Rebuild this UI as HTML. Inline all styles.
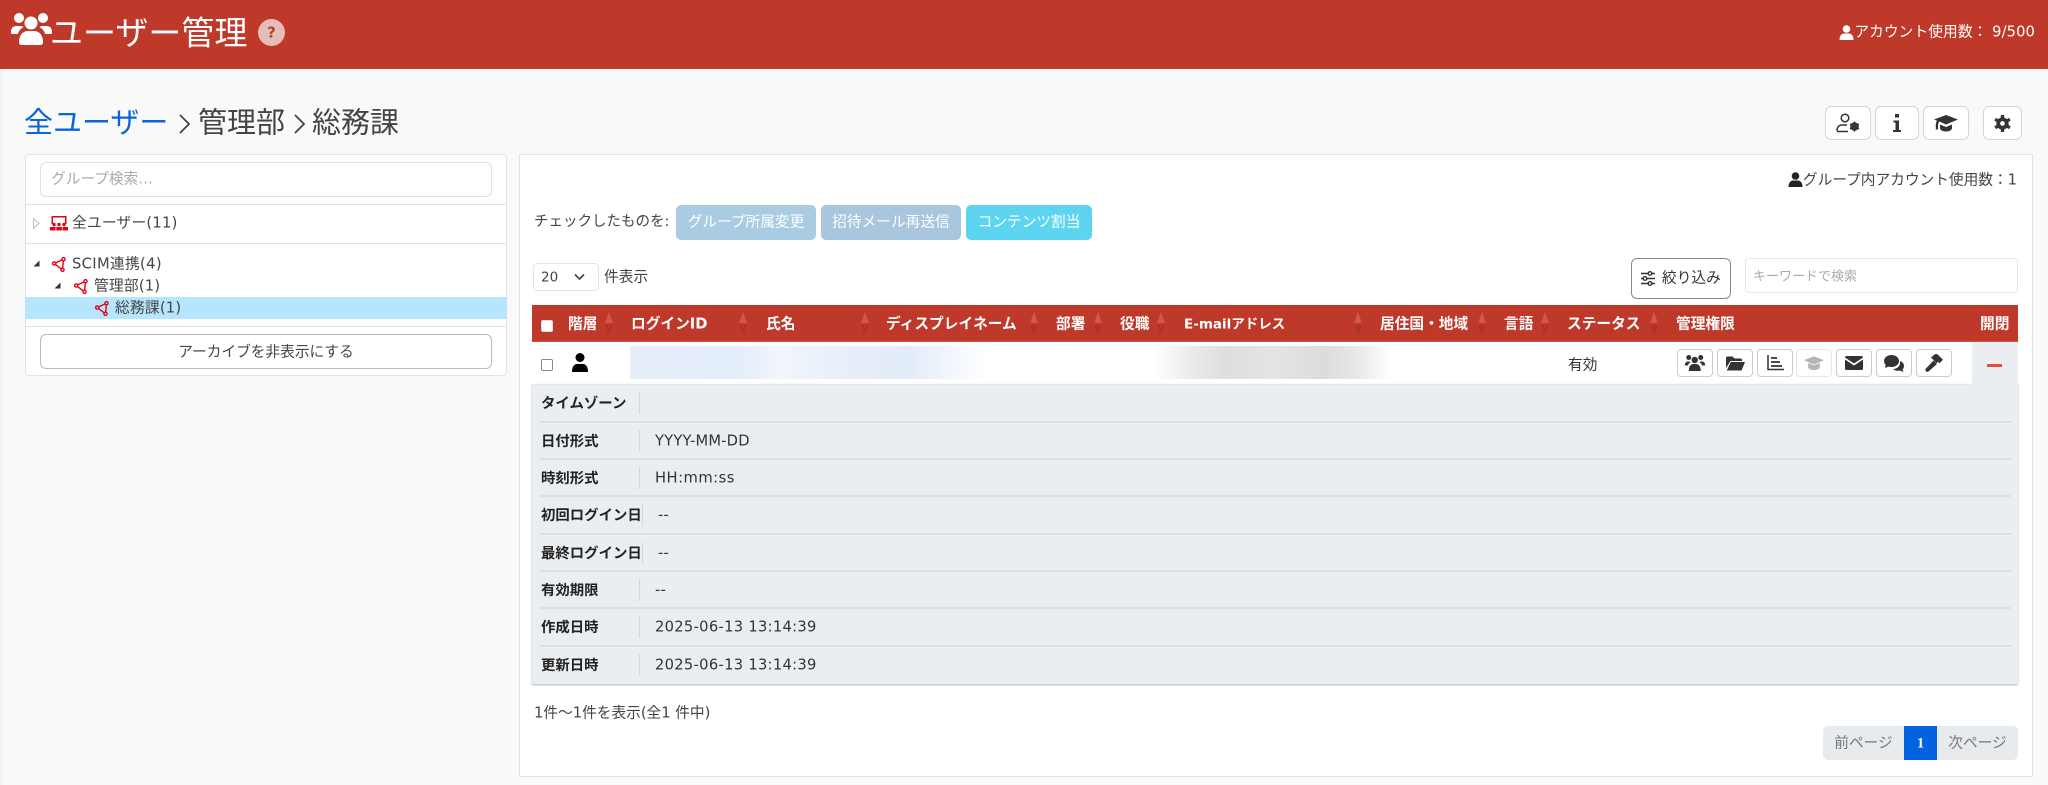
<!DOCTYPE html>
<html lang="ja"><head><meta charset="utf-8"><title>ユーザー管理</title>
<style>
*{box-sizing:border-box}
html,body{margin:0;padding:0;background:#f9f9f9}
body{width:2048px;height:785px;overflow:hidden;position:relative;font-family:"DejaVu Sans","Noto Sans CJK JP",sans-serif;font-size:14.7px;color:#444;filter:blur(.25px)}
.t{position:absolute;white-space:nowrap;line-height:1;transform:translateY(calc(-50% + 1px))}
.b{position:absolute}
.th{color:#fff;font-weight:700;top:324px}
.lb{font-weight:700;color:#222;left:541px;font-size:14.4px}
.v{color:#333;left:655px;letter-spacing:.2px}
.dv{position:absolute;width:1px;height:22px;background:#d4d8da}
.sp{position:absolute;left:540px;width:1471px;height:2px;background:#dcdfe1}
.up{position:absolute;top:312px;width:0;height:0;border-left:4.5px solid transparent;border-right:4.5px solid transparent;border-bottom:11px solid #d0594d}
.dn{position:absolute;top:325px;width:0;height:0;border-left:4.5px solid transparent;border-right:4.5px solid transparent;border-top:11px solid #b23428}
.ib{position:absolute;top:349px;height:28px;background:#fff;border:1px solid #ccc;border-radius:4px;display:flex;align-items:center;justify-content:center}
.tb{position:absolute;top:106px;height:34px;background:#fff;border:1px solid #d5d5d5;border-radius:6px;display:flex;align-items:center;justify-content:center}
.cb{position:absolute;left:541px;width:12px;height:12px;border-radius:2px}
.ln{position:absolute;left:25px;width:482px;height:1px;background:#e1e1e1}
.tr{letter-spacing:.25px}
</style></head><body>
<div class="b" style="left:0;top:0;width:2048px;height:69px;background:#bf392b"></div>
<div class="b" style="left:0;top:69px;width:3px;height:716px;background:#f1f1f1"></div>

<svg class="b" style="left:10px;top:11px" width="43" height="36" viewBox="0 0 43 36" fill="#fff"><circle cx="9" cy="7" r="5"/><circle cx="33" cy="7" r="5"/><circle cx="21" cy="12" r="6.5"/><path d="M1 21c0-5 3-6 6-6h4c1 0 2 .5 2.5 1-3 2-5 4-5.500 7H2c-.6 0-1-.4-1-2zM42 21c0-5-3-6-6-6h-4c-1 0-2 .5-2.500 1 3 2 5 4 5.500 7h6c.6 0 1-.4 1-2z"/><path d="M9 31c0-7 4-11 9-11h6c5 0 9 4 9 11 0 2-1 3-3 3H12c-2 0-3-1-3-3z"/></svg>
<div class="t" style="left:50px;top:31.500px;font-size:33px;color:#fff">ユーザー管理</div>
<div class="b" style="left:258px;top:19px;width:27px;height:27px;border-radius:50%;background:#e9bcb6"></div>
<div class="t" style="left:258px;width:27px;text-align:center;top:31.500px;font-size:15px;font-weight:700;color:#9a4a40">?</div>
<svg class="b" style="left:1839px;top:25px" width="15" height="15" viewBox="0 0 15 15" fill="#fff"><circle cx="7.500" cy="4" r="3.800"/><path d="M.5 15c0-4 2-6.500 4.500-6.500h5c2.500 0 4.500 2.500 4.500 6.500z"/></svg>
<div class="t" style="right:13px;top:32px;color:#fff;letter-spacing:.1px">アカウント使用数： 9/500</div>

<div class="t" style="left:24px;top:122px;font-size:29px;color:#0a66d8">全ユーザー</div>
<svg class="b" style="left:178px;top:113px" width="14" height="22" fill="none" stroke="#444" stroke-width="1.800"><path d="M2 2l9 9-9 9"/></svg>
<div class="t" style="left:198px;top:122px;font-size:29px;color:#444">管理部</div>
<svg class="b" style="left:293px;top:113px" width="14" height="22" fill="none" stroke="#444" stroke-width="1.800"><path d="M2 2l9 9-9 9"/></svg>
<div class="t" style="left:312px;top:122px;font-size:29px;color:#444">総務課</div>

<div class="tb" style="left:1825px;width:46px"><svg width="24" height="20" viewBox="0 0 24 20" fill="none" stroke="#333" stroke-width="1.500"><circle cx="9" cy="5" r="3.800"/><path d="M1 18c0-4 2-6 5-6h5"/><path d="M1 18.500h11"/><circle cx="18.500" cy="13.500" r="3" stroke-width="2.600"/><path d="M18.500 8.500v10M14 11l9 5M14 16l9-5" stroke-width="1.500"/></svg></div>
<div class="tb" style="left:1875px;width:44px"><svg width="10" height="20" viewBox="0 0 10 20" fill="#333"><rect x="3" y="1" width="4" height="3.500"/><path d="M1.500 7.500H7V17h2v2H1v-2h2.500V9.500h-2z"/></svg></div>
<div class="tb" style="left:1923px;width:46px"><svg width="24" height="18" viewBox="0 0 24 18" fill="#333"><path d="M12 1L0 5.500l3 1.200C2 8.200 1.800 10 1.800 11.500v4H4v-4c0-1.500.5-3 1.500-4L12 10.500l12-5z"/><path d="M6 10.500V14c0 2 2.500 3.500 6 3.500s6-1.500 6-3.500v-3.500L12 13z"/></svg></div>
<div class="tb" style="left:1983px;width:39px"><svg width="17" height="17" viewBox="0 0 18 18"><circle cx="9" cy="9" r="4.500" fill="none" stroke="#333" stroke-width="4"/><g stroke="#333" stroke-width="3.500"><path d="M9 0v4M9 14v4M1.200 4.500l3.500 2M13.300 11.500l3.500 2M1.200 13.500l3.500-2M13.300 6.500l3.500-2"/></g></svg></div>

<!-- left panel -->
<div class="b" style="left:25px;top:154px;width:482px;height:222px;background:#fff;border:1px solid #e3e3e3;border-radius:4px"></div>
<div class="b" style="left:40px;top:162px;width:452px;height:35px;background:#fff;border:1px solid #e0e0e0;border-radius:6px"></div>
<div class="t" style="left:51px;top:179px;color:#aaa">グループ検索…</div>
<div class="ln" style="top:204px"></div>
<div class="ln" style="top:243px"></div>
<div class="ln" style="top:326px"></div>
<svg class="b" style="left:33px;top:218px" width="7" height="11"><path d="M.5.500l5.500 5-5.500 5z" fill="#fff" stroke="#bbb"/></svg>
<svg class="b" style="left:50px;top:215px" width="18" height="16" viewBox="0 0 18 16" fill="#e60012"><path d="M1.500 9V1h15v8H15V2.500H3V9z"/><circle cx="4" cy="9.500" r="1.700"/><circle cx="9" cy="9.500" r="1.700"/><circle cx="14" cy="9.500" r="1.700"/><rect x="0" y="12" width="5.500" height="3.500"/><rect x="6.300" y="12" width="5.500" height="3.500"/><rect x="12.500" y="12" width="5.500" height="3.500"/></svg>
<div class="t tr" style="left:72px;top:223px">全ユーザー(11)</div>

<svg class="b" style="left:33px;top:260px" width="7" height="7"><path d="M6.500.500v6h-6z" fill="#333"/></svg>
<svg class="b" style="left:52px;top:257px" width="14" height="15" viewBox="0 0 14 15" fill="none" stroke="#e60012" stroke-width="1.400"><path d="M11.500 2.200L2.200 6.500l8.300 6.300z"/><circle cx="11.500" cy="2.200" r="1.600" fill="#fff"/><circle cx="2.200" cy="6.500" r="1.600" fill="#fff"/><circle cx="10.500" cy="12.800" r="1.600" fill="#fff"/></svg>
<div class="t tr" style="left:72px;top:264px;letter-spacing:.35px">SCIM連携(4)</div>

<svg class="b" style="left:54px;top:282px" width="7" height="7"><path d="M6.500.500v6h-6z" fill="#333"/></svg>
<svg class="b" style="left:74px;top:279px" width="14" height="15" viewBox="0 0 14 15" fill="none" stroke="#e60012" stroke-width="1.400"><path d="M11.500 2.200L2.200 6.500l8.300 6.300z"/><circle cx="11.500" cy="2.200" r="1.600" fill="#fff"/><circle cx="2.200" cy="6.500" r="1.600" fill="#fff"/><circle cx="10.500" cy="12.800" r="1.600" fill="#fff"/></svg>
<div class="t tr" style="left:94px;top:286px">管理部(1)</div>

<div class="b" style="left:25px;top:297px;width:482px;height:22px;background:#b5e6fd"></div>
<svg class="b" style="left:95px;top:301px" width="14" height="15" viewBox="0 0 14 15" fill="none" stroke="#e60012" stroke-width="1.400"><path d="M11.500 2.200L2.200 6.500l8.300 6.300z"/><circle cx="11.500" cy="2.200" r="1.600" fill="#b5e6fd"/><circle cx="2.200" cy="6.500" r="1.600" fill="#b5e6fd"/><circle cx="10.500" cy="12.800" r="1.600" fill="#b5e6fd"/></svg>
<div class="t tr" style="left:115px;top:308px">総務課(1)</div>
<div class="b" style="left:40px;top:334px;width:452px;height:35px;background:#fff;border:1px solid #bbb;border-radius:6px"></div>
<div class="t" style="left:40px;width:452px;text-align:center;top:351.500px">アーカイブを非表示にする</div>

<!-- right panel -->
<div class="b" style="left:519px;top:154px;width:1514px;height:623px;background:#fff;border:1px solid #e3e3e3"></div>
<svg class="b" style="left:1788px;top:172px" width="15" height="15" viewBox="0 0 15 15" fill="#222"><circle cx="7.500" cy="4" r="3.800"/><path d="M.5 15c0-4 2-6.500 4.500-6.500h5c2.500 0 4.500 2.500 4.500 6.500z"/></svg>
<div class="t" style="right:31px;top:179.500px">グループ内アカウント使用数：1</div>

<div class="t" style="left:534px;top:221px;font-size:14.500px">チェックしたものを:</div>
<div class="b" style="left:676px;top:205px;width:140px;height:35px;background:#a9cce3;border-radius:5px"></div>
<div class="t" style="left:676px;width:140px;text-align:center;top:222px;color:#fff">グループ所属変更</div>
<div class="b" style="left:821px;top:205px;width:140px;height:35px;background:#a9c6de;border-radius:5px"></div>
<div class="t" style="left:821px;width:140px;text-align:center;top:222px;color:#fff">招待メール再送信</div>
<div class="b" style="left:966px;top:205px;width:126px;height:35px;background:#5dd5f0;border-radius:5px"></div>
<div class="t" style="left:966px;width:126px;text-align:center;top:222px;color:#fff">コンテンツ割当</div>

<div class="b" style="left:533px;top:263px;width:66px;height:28px;background:#fff;border:1px solid #e3e3e3;border-radius:4px"></div>
<div class="t" style="left:541px;top:277px;font-size:13.500px">20</div>
<svg class="b" style="left:574px;top:273px" width="11" height="8" fill="none" stroke="#444" stroke-width="1.600"><path d="M1 1.500l4.500 4.500 4.500-4.500"/></svg>
<div class="t" style="left:604px;top:277px">件表示</div>

<div class="b" style="left:1631px;top:258px;width:100px;height:41px;background:#fff;border:1.500px solid #888;border-radius:6px"></div>
<svg class="b" style="left:1640px;top:271px" width="16" height="15" fill="none" stroke="#333" stroke-width="1.400"><path d="M1 2.500h14M1 7.500h14M1 12.500h14"/><circle cx="10" cy="2.500" r="1.800" fill="#fff"/><circle cx="5" cy="7.500" r="1.800" fill="#fff"/><circle cx="10" cy="12.500" r="1.800" fill="#fff"/></svg>
<div class="t" style="left:1662px;top:278px;color:#333">絞り込み</div>
<div class="b" style="left:1745px;top:258px;width:273px;height:35px;background:#fff;border:1px solid #e6e6e6;border-radius:4px"></div>
<div class="t" style="left:1753px;top:275.500px;color:#aaa;font-size:13px">キーワードで検索</div>

<!-- table -->
<div class="b" style="left:532px;top:305px;width:1486px;height:36px;background:#bf392b"></div>
<div class="b" style="left:532px;top:341px;width:1486px;height:1px;background:#dc4f41"></div>
<div class="b" style="left:532px;top:384px;width:1486px;height:300px;background:#ebeef0;box-shadow:0 1px 2px rgba(0,0,0,.3)"></div>
<div class="b" style="left:1972px;top:342px;width:46px;height:42px;background:#ebeef0"></div>
<div class="b" style="left:532px;top:384px;width:1440px;height:1px;background:#e4e7e8"></div>

<div class="cb" style="top:320px;background:#fff;border:1px solid #ddd"></div>
<div class="t th" style="left:568px">階層</div><div class="up" style="left:605px"></div><div class="dn" style="left:605px"></div>
<div class="t th" style="left:631px">ログインID</div><div class="up" style="left:739px"></div><div class="dn" style="left:739px"></div>
<div class="t th" style="left:766px">氏名</div><div class="up" style="left:861px"></div><div class="dn" style="left:861px"></div>
<div class="t th" style="left:886px">ディスプレイネーム</div><div class="up" style="left:1030px"></div><div class="dn" style="left:1030px"></div>
<div class="t th" style="left:1056px">部署</div><div class="up" style="left:1094px"></div><div class="dn" style="left:1094px"></div>
<div class="t th" style="left:1120px">役職</div><div class="up" style="left:1157px"></div><div class="dn" style="left:1157px"></div>
<div class="t th" style="left:1184px;font-size:13.500px">E-mailアドレス</div><div class="up" style="left:1354px"></div><div class="dn" style="left:1354px"></div>
<div class="t th" style="left:1380px">居住国・地域</div><div class="up" style="left:1478px"></div><div class="dn" style="left:1478px"></div>
<div class="t th" style="left:1504px">言語</div><div class="up" style="left:1541px"></div><div class="dn" style="left:1541px"></div>
<div class="t th" style="left:1567px">ステータス</div><div class="up" style="left:1650px"></div><div class="dn" style="left:1650px"></div>
<div class="t th" style="left:1676px">管理権限</div>
<div class="t th" style="left:1980px">開閉</div>

<div class="cb" style="top:359px;background:#fff;border:1px solid #888"></div>
<svg class="b" style="left:572px;top:353px" width="16" height="19" viewBox="0 0 16 19" fill="#000"><circle cx="8" cy="4.500" r="4.500"/><path d="M0 19c0-5 2-8 5-8h6c3 0 5 3 5 8z"/></svg>
<div class="b" style="left:630px;top:346px;width:355px;height:33px;background:linear-gradient(90deg,#e6eefa 0,#e4edfa 30%,#f1f5fc 42%,#e8eff9 60%,#e2ebf8 78%,#fff 100%)"></div>
<div class="b" style="left:1155px;top:346px;width:235px;height:33px;background:linear-gradient(90deg,#fff 0,#ececec 14%,#dedede 30%,#e4e4e4 50%,#dcdcdc 72%,#e8e8e8 86%,#fff 100%)"></div>
<div class="t" style="left:1568px;top:365px;color:#333">有効</div>

<div class="ib" style="left:1677px;width:36px"><svg width="22" height="18" viewBox="0 0 43 36" fill="#333"><circle cx="9" cy="7" r="5"/><circle cx="33" cy="7" r="5"/><circle cx="21" cy="12" r="6.500"/><path d="M1 23c0-5 3-8 6-8h4l2 1c-3 2-5 4-5.500 7zM42 23c0-5-3-8-6-8h-4l-2 1c3 2 5 4 5.500 7z"/><path d="M9 34c0-9 4-14 9-14h6c5 0 9 5 9 14z"/></svg></div>
<div class="ib" style="left:1717px;width:36px"><svg width="19" height="15" viewBox="0 0 19 15" fill="#333"><path d="M0 2c0-1 .7-1.500 1.500-1.500h5L8.500 2.500h6c1 0 1.500.5 1.500 1.500v1H4.500L0 12zM4.800 6H19l-3.500 8.500H.8z"/></svg></div>
<div class="ib" style="left:1757px;width:36px"><svg width="17" height="16" viewBox="0 0 17 16" fill="none" stroke="#333" stroke-width="1.500"><path d="M1 0v14.500h16"/><path d="M4 3h6M4 7h9M4 11h11" stroke-width="1.700"/></svg></div>
<div class="ib" style="left:1796px;width:36px;border-color:#e8e8e8"><svg width="20" height="16" viewBox="0 0 24 18" fill="#b5b5b5"><path d="M12 1L0 5.500 12 11l12-5.500zM5 9v5c0 2 3 3.500 7 3.500s7-1.500 7-3.500V9l-7 3z"/></svg></div>
<div class="ib" style="left:1836px;width:36px"><svg width="18" height="14" viewBox="0 0 18 14" fill="#333"><path d="M1.500 0h15C17.400 0 18 .6 18 1.500L9 7.500 0 1.500C0 .6.600 0 1.500 0zM0 3.500l9 6 9-6v9c0 .9-.6 1.500-1.500 1.500h-15C.6 14 0 13.400 0 12.500z"/></svg></div>
<div class="ib" style="left:1876px;width:36px"><svg width="20" height="17" viewBox="0 0 20 17" fill="#333"><ellipse cx="7.500" cy="6" rx="7.500" ry="6"/><path d="M2 9l-1 4 5-2z"/><path d="M16 6c2.500 1 4 2.500 4 5 0 1.500-.6 2.500-1.500 3.500l1 2.500-4-1.500c-2.500.7-5 0-6.500-1.500 4 0 8-3 7-8z"/></svg></div>
<div class="ib" style="left:1916px;width:36px"><svg width="18" height="18" viewBox="0 0 18 18" fill="#333"><path d="M6 3.500L9.500.5c1-.7 2.500-.7 3.500.2l5 5-3.500 3.500-1.500-1.500-1.500 1.500L8 5.500zM8.500 6.500L12 10 3.800 17.300c-.8.800-2 .800-2.800 0s-.8-2 0-2.800z"/></svg></div>
<div class="b" style="left:1987px;top:364px;width:15px;height:3px;background:#e74c3c"></div>

<div class="t lb" style="top:403px">タイムゾーン</div><div class="dv" style="left:639px;top:392px"></div><div class="sp" style="top:421px"></div>
<div class="t lb" style="top:441px">日付形式</div><div class="dv" style="left:639px;top:430px"></div><div class="t v" style="top:441px">YYYY-MM-DD</div><div class="sp" style="top:458px"></div>
<div class="t lb" style="top:478px">時刻形式</div><div class="dv" style="left:639px;top:467px"></div><div class="t v" style="top:478px;letter-spacing:.5px">HH:mm:ss</div><div class="sp" style="top:495px"></div>
<div class="t lb" style="top:515px">初回ログイン日</div><div class="dv" style="left:642px;top:504px"></div><div class="t v" style="top:515px;left:658px">--</div><div class="sp" style="top:533px"></div>
<div class="t lb" style="top:553px">最終ログイン日</div><div class="dv" style="left:642px;top:542px"></div><div class="t v" style="top:553px;left:658px">--</div><div class="sp" style="top:570px"></div>
<div class="t lb" style="top:590px">有効期限</div><div class="dv" style="left:639px;top:579px"></div><div class="t v" style="top:590px">--</div><div class="sp" style="top:607px"></div>
<div class="t lb" style="top:627px">作成日時</div><div class="dv" style="left:639px;top:616px"></div><div class="t v" style="top:627px;letter-spacing:.3px">2025-06-13 13:14:39</div><div class="sp" style="top:645px"></div>
<div class="t lb" style="top:665px">更新日時</div><div class="dv" style="left:639px;top:654px"></div><div class="t v" style="top:665px;letter-spacing:.3px">2025-06-13 13:14:39</div>

<div class="t" style="left:534px;top:713px">1件～1件を表示(全1 件中)</div>
<div class="b" style="left:1823px;top:726px;width:195px;height:34px;background:#e8ebee;border-radius:5px"></div>
<div class="b" style="left:1904px;top:726px;width:33px;height:34px;background:#0263e0"></div>
<div class="t" style="left:1823px;width:81px;text-align:center;top:742.500px;color:#777">前ページ</div>
<div class="t" style="left:1904px;width:33px;text-align:center;top:742.500px;color:#fff;font-family:'Liberation Serif',serif;font-weight:700">1</div>
<div class="t" style="left:1937px;width:81px;text-align:center;top:742.500px;color:#777">次ページ</div>
</body></html>
